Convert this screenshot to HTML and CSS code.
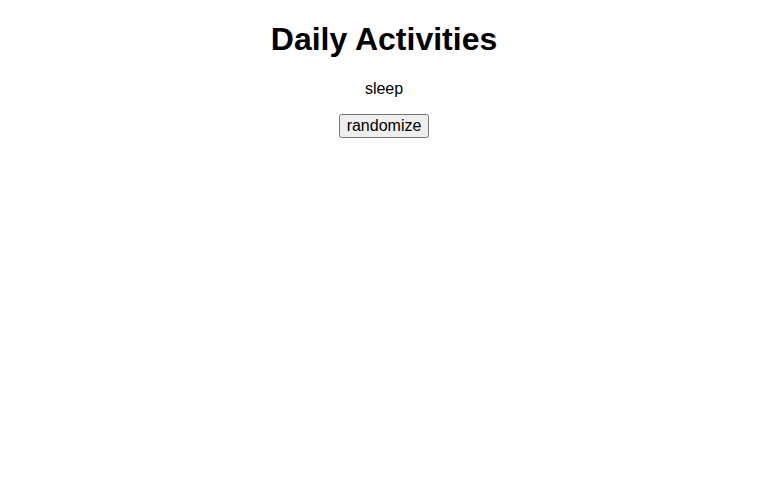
FILE: index.html
```html
<!DOCTYPE html>
<html lang="en">
<head>
    <meta charset="UTF-8">
    <meta name="viewport" content="width=device-width, initial-scale=1.0">
    <title>Daily Activities</title>
    <link rel="stylesheet" href="styles.css">
</head>
<body>
    <div class="app">
        <h1>Daily Activities</h1>
        <p class="activity">sleep</p>
        <button class="randomize-btn">randomize</button>
    </div>
</body>
</html>
```

FILE: styles.css
```css
body {
    margin: 0;
    font-family: 'Liberation Sans', Arial, sans-serif;
    background-color: white;
    color: black;
}
.app {
    text-align: center;
}
.randomize-btn {
    font-family: inherit;
    font-size: 16px;
}
```
